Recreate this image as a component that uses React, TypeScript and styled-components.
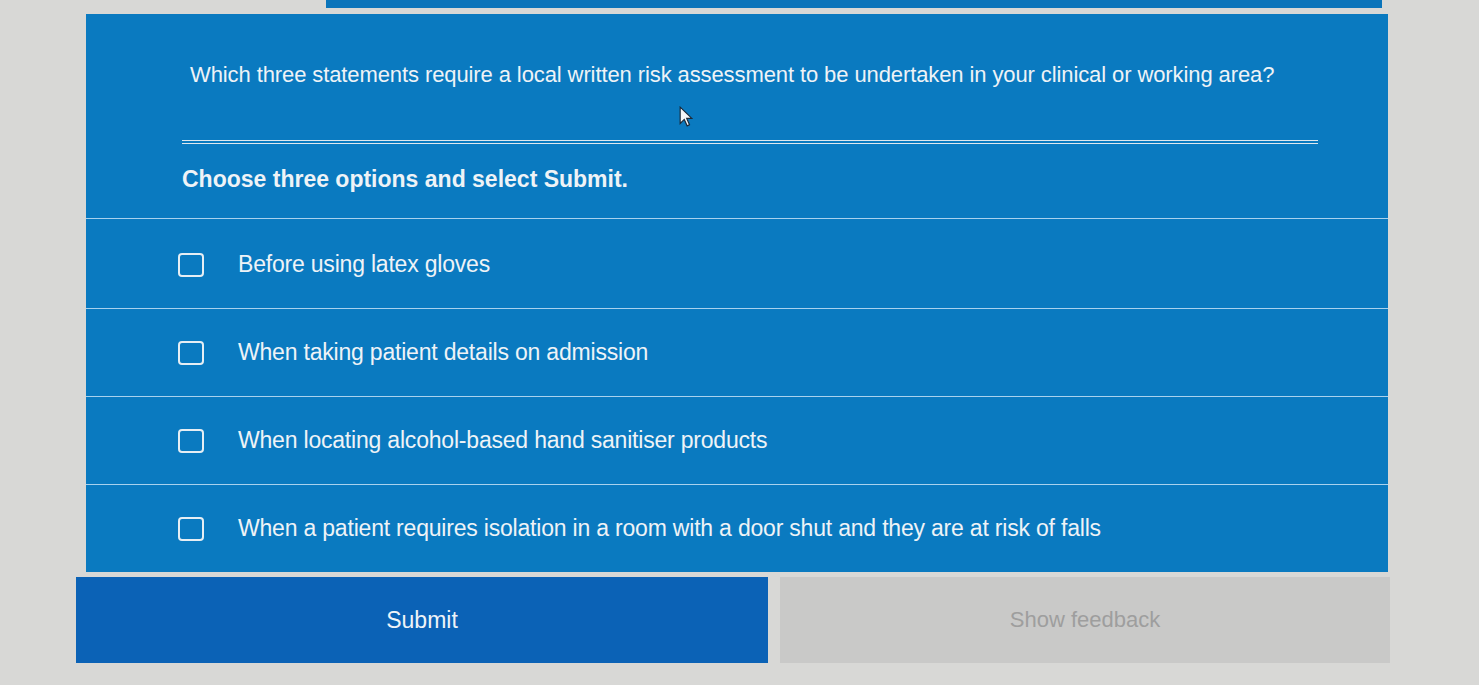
import styled, { createGlobalStyle } from "styled-components";

const GlobalStyle = createGlobalStyle`
  html, body {
    margin: 0;
    padding: 0;
    background-color: #d8d8d6;
    font-family: "Liberation Sans", Arial, sans-serif;
  }
`;

const Page = styled.main`
  position: relative;
  width: 1479px;
  height: 685px;
  overflow: hidden;
  display: flex;
  flex-direction: column;
  padding: 0 91px 0 86px;
  box-sizing: border-box;
`;

// tail end of the block above the question
const PrevBlock = styled.div`
  height: 8px;
  margin: 0 6px 6px 240px;
  background-color: #0a74ba;
`;

const Card = styled.section`
  background-color: #0a7ac0;
  color: #eef3f7;
`;

const Header = styled.header`
  padding: 48px 40px 0 104px;
`;

const Question = styled.p`
  margin: 0;
  font-size: 22px;
  line-height: 26px;
  letter-spacing: -0.1px;
`;

const DoubleRule = styled.hr`
  margin: 52px 30px 0 -8px;
  height: 0;
  border: 0;
  border-top: 4px double #dfe8ef;
`;

const Instruction = styled.p`
  margin: 22px 0 0 -8px;
  padding-bottom: 26px;
  font-size: 23px;
  line-height: 26px;
  font-weight: 700;
`;

const Options = styled.ul`
  list-style: none;
  margin: 0;
  padding: 2px 0 0;
  border-top: 1px solid #a9d2ee;
`;

const Option = styled.li<{ last?: boolean }>`
  display: flex;
  align-items: center;
  gap: 34px;
  height: 87px;
  padding-left: 92px;
  border-bottom: ${(p) => (p.last ? "none" : "1px solid #a9d2ee")};
  font-size: 23px;
  letter-spacing: -0.2px;
`;

const Box = styled.span`
  width: 22px;
  height: 20px;
  border: 2px solid #e6eef4;
  border-radius: 4px;
  flex-shrink: 0;
`;

const Actions = styled.div`
  display: grid;
  grid-template-columns: 692px 1fr;
  gap: 12px;
  margin: 5px -2px 0 -10px;
`;

const Button = styled.button<{ primary?: boolean }>`
  height: 86px;
  border: 0;
  font-family: inherit;
  font-size: ${(p) => (p.primary ? "23px" : "22px")};
  background-color: ${(p) => (p.primary ? "#0b62b6" : "#c9c9c8")};
  color: ${(p) => (p.primary ? "#eef3f8" : "#9e9e9e")};
  cursor: ${(p) => (p.primary ? "pointer" : "default")};
`;

const Pointer = styled.svg`
  position: absolute;
  left: 679px;
  top: 106px;
  width: 14px;
  height: 21px;
`;

const answers = [
  "Before using latex gloves",
  "When taking patient details on admission",
  "When locating alcohol-based hand sanitiser products",
  "When a patient requires isolation in a room with a door shut and they are at risk of falls",
];

export default function App() {
  return (
    <>
      <GlobalStyle />
      <Page>
        <PrevBlock />
        <Card>
          <Header>
            <Question>
              Which three statements require a local written risk assessment to be undertaken in your clinical or working area?
            </Question>
            <DoubleRule />
            <Instruction>Choose three options and select Submit.</Instruction>
          </Header>
          <Options>
            {answers.map((a, i) => (
              <Option key={a} last={i === answers.length - 1}>
                <Box />
                <span>{a}</span>
              </Option>
            ))}
          </Options>
        </Card>
        <Actions>
          <Button primary>Submit</Button>
          <Button disabled>Show feedback</Button>
        </Actions>
        <Pointer viewBox="0 0 12 18">
          <path d="M1 1 L1 15 L4.5 11.5 L7 17 L9 16 L6.6 10.6 L11 10.6 Z" fill="#f4f6f8" stroke="#1a2a3a" strokeWidth="1" />
        </Pointer>
      </Page>
    </>
  );
}
